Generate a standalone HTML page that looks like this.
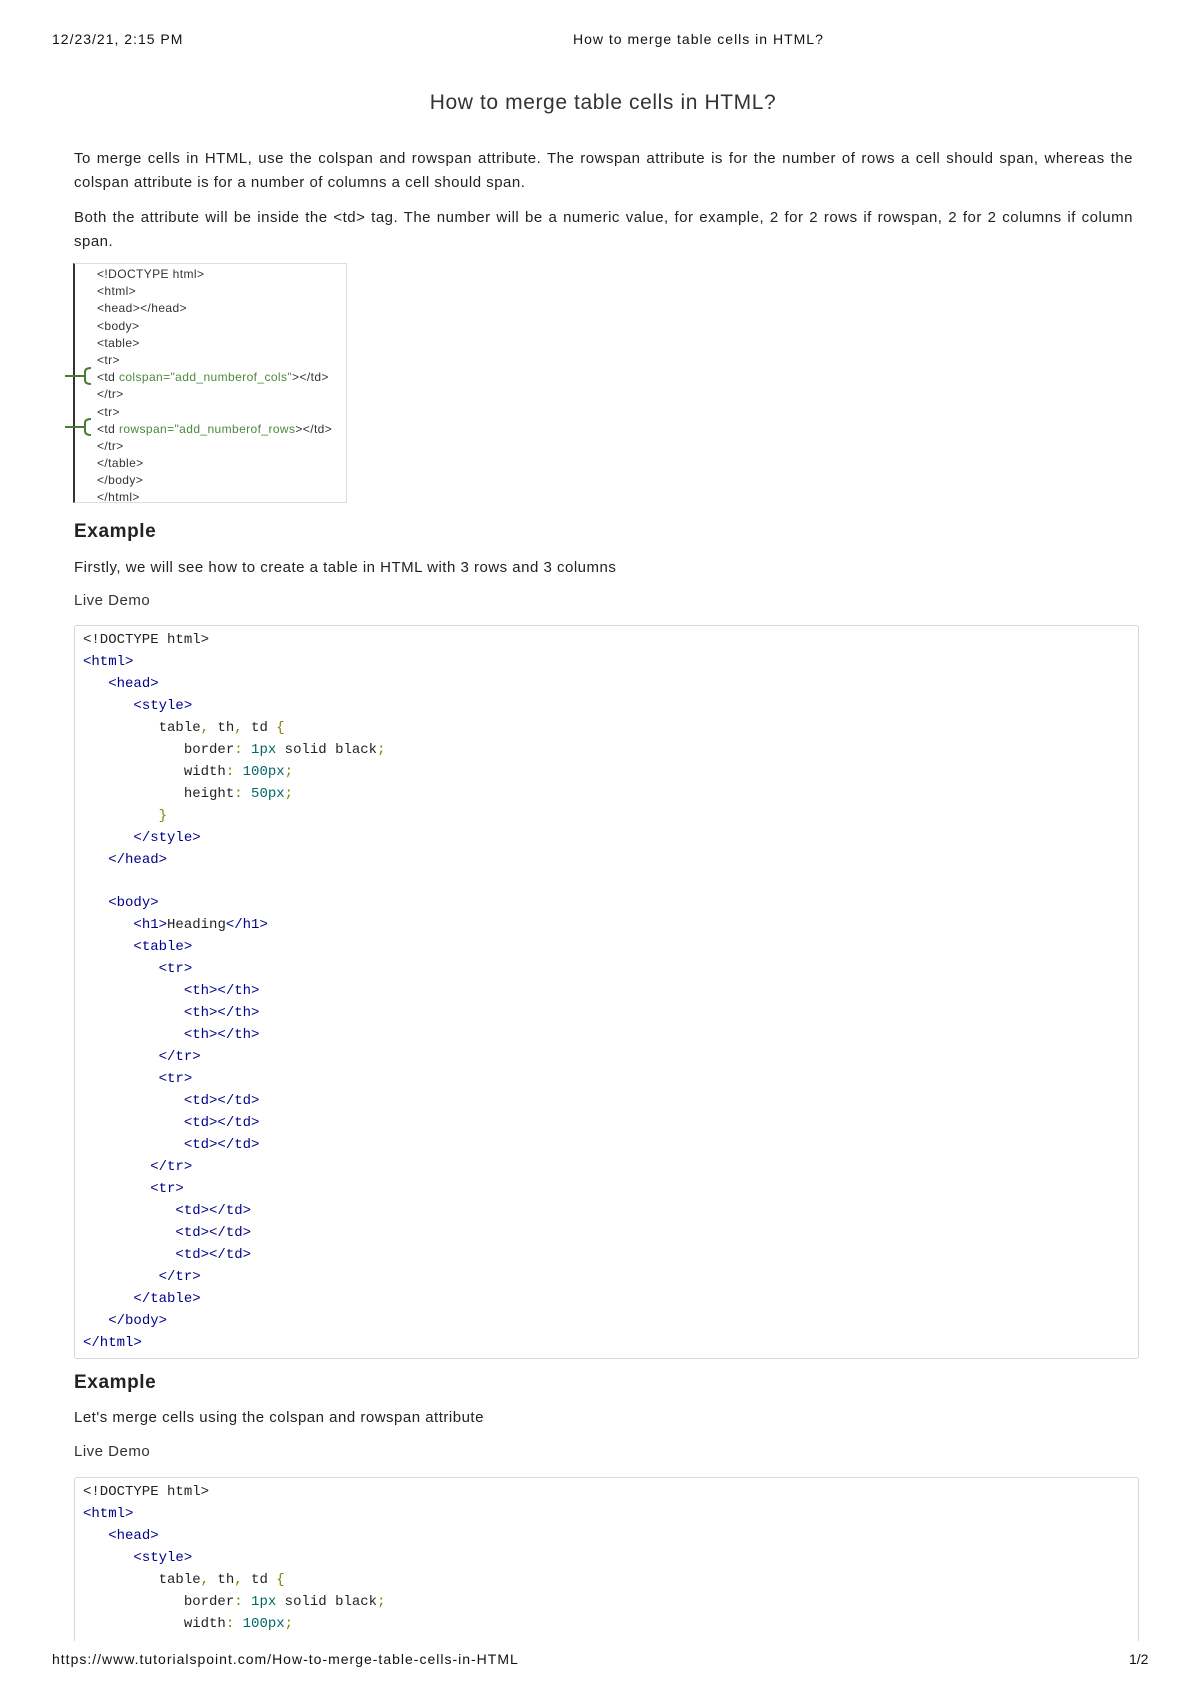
<!DOCTYPE html>
<html><head><meta charset="utf-8">
<style>
*{margin:0;padding:0;box-sizing:border-box}
body{width:1200px;height:1698px;background:#fff;position:relative;overflow:hidden;font-family:"Liberation Sans",sans-serif;color:#222}
.a{position:absolute;white-space:nowrap}
.hdr{font-size:14px;color:#111;letter-spacing:1px}
p.t{position:absolute;left:74px;width:1059px;font-size:15px;line-height:24px;text-align:justify;color:#222;letter-spacing:0.5px}
h2{position:absolute;left:74px;font-size:19px;font-weight:bold;color:#222;letter-spacing:0.6px}
.s{font-size:15px;color:#222;letter-spacing:0.5px}
.code{position:absolute;left:74px;width:1065px;border:1px solid #d8d8d8;border-radius:3px;background:#fff;overflow:hidden}
.code pre{font-family:"Liberation Mono",monospace;font-size:14px;line-height:21.95px;color:#222;padding:4px 0 0 8px}
.k{color:#000088}
.n{color:#006666}
.o{color:#808000}
.img{position:absolute;left:73px;top:263px;width:274px;height:240px;border:1px solid #ddd;border-left:2px solid #333;background:#fff}
.img div{position:absolute;left:22px;font-size:12px;letter-spacing:0.4px;color:#333;white-space:nowrap;font-family:"Liberation Sans",sans-serif}
.img .g{color:#4a8a3a}
</style></head><body>
<div class="a hdr" style="left:52px;top:31px">12/23/21, 2:15 PM</div>
<div class="a hdr" style="left:573px;top:31px">How to merge table cells in HTML?</div>
<div class="a" style="left:0;width:1206px;text-align:center;top:91px;font-size:21px;color:#333;letter-spacing:0.6px">How to merge table cells in HTML?</div>

<p class="t" style="top:147px">To merge cells in HTML, use the colspan and rowspan attribute. The rowspan attribute is for the number of rows a cell should span, whereas the colspan attribute is for a number of columns a cell should span.</p>
<p class="t" style="top:206px">Both the attribute will be inside the &lt;td&gt; tag. The number will be a numeric value, for example, 2 for 2 rows if rowspan, 2 for 2 columns if column span.</p>

<div class="img">
<div style="top:3px">&lt;!DOCTYPE html&gt;</div>
<div style="top:20px">&lt;html&gt;</div>
<div style="top:37px">&lt;head&gt;&lt;/head&gt;</div>
<div style="top:55px">&lt;body&gt;</div>
<div style="top:72px">&lt;table&gt;</div>
<div style="top:89px">&lt;tr&gt;</div>
<div style="top:106px">&lt;td <span class="g">colspan="add_numberof_cols"</span>&gt;&lt;/td&gt;</div>
<div style="top:123px">&lt;/tr&gt;</div>
<div style="top:141px">&lt;tr&gt;</div>
<div style="top:158px">&lt;td <span class="g">rowspan="add_numberof_rows</span>&gt;&lt;/td&gt;</div>
<div style="top:175px">&lt;/tr&gt;</div>
<div style="top:192px">&lt;/table&gt;</div>
<div style="top:209px">&lt;/body&gt;</div>
<div style="top:226px">&lt;/html&gt;</div>
<svg style="position:absolute;left:-10px;top:98px" width="30" height="80"><path d="M0 14H20M26 6Q20 6 20 10V18Q20 22 26 22M0 65H20M26 57Q20 57 20 61V69Q20 73 26 73" stroke="#4a7a3a" stroke-width="2" fill="none"/></svg>
</div>

<h2 style="top:521px">Example</h2>
<div class="a s" style="left:74px;top:559px">Firstly, we will see how to create a table in HTML with 3 rows and 3 columns</div>
<div class="a s" style="left:74px;top:592px;color:#333">Live Demo</div>

<div class="code" style="top:625px;height:734px"><pre>&lt;!DOCTYPE html&gt;
<span class="k">&lt;html&gt;</span>
   <span class="k">&lt;head&gt;</span>
      <span class="k">&lt;style&gt;</span>
         table<span class="o">,</span> th<span class="o">,</span> td <span class="o">{</span>
            border<span class="o">:</span> <span class="n">1px</span> solid black<span class="o">;</span>
            width<span class="o">:</span> <span class="n">100px</span><span class="o">;</span>
            height<span class="o">:</span> <span class="n">50px</span><span class="o">;</span>
         <span class="o">}</span>
      <span class="k">&lt;/style&gt;</span>
   <span class="k">&lt;/head&gt;</span>

   <span class="k">&lt;body&gt;</span>
      <span class="k">&lt;h1&gt;</span>Heading<span class="k">&lt;/h1&gt;</span>
      <span class="k">&lt;table&gt;</span>
         <span class="k">&lt;tr&gt;</span>
            <span class="k">&lt;th&gt;&lt;/th&gt;</span>
            <span class="k">&lt;th&gt;&lt;/th&gt;</span>
            <span class="k">&lt;th&gt;&lt;/th&gt;</span>
         <span class="k">&lt;/tr&gt;</span>
         <span class="k">&lt;tr&gt;</span>
            <span class="k">&lt;td&gt;&lt;/td&gt;</span>
            <span class="k">&lt;td&gt;&lt;/td&gt;</span>
            <span class="k">&lt;td&gt;&lt;/td&gt;</span>
        <span class="k">&lt;/tr&gt;</span>
        <span class="k">&lt;tr&gt;</span>
           <span class="k">&lt;td&gt;&lt;/td&gt;</span>
           <span class="k">&lt;td&gt;&lt;/td&gt;</span>
           <span class="k">&lt;td&gt;&lt;/td&gt;</span>
         <span class="k">&lt;/tr&gt;</span>
      <span class="k">&lt;/table&gt;</span>
   <span class="k">&lt;/body&gt;</span>
<span class="k">&lt;/html&gt;</span></pre></div>

<h2 style="top:1372px">Example</h2>
<div class="a s" style="left:74px;top:1409px">Let's merge cells using the colspan and rowspan attribute</div>
<div class="a s" style="left:74px;top:1443px;color:#333">Live Demo</div>

<div class="code" style="top:1477px;height:164px;border-bottom:none;border-radius:3px 3px 0 0"><pre>&lt;!DOCTYPE html&gt;
<span class="k">&lt;html&gt;</span>
   <span class="k">&lt;head&gt;</span>
      <span class="k">&lt;style&gt;</span>
         table<span class="o">,</span> th<span class="o">,</span> td <span class="o">{</span>
            border<span class="o">:</span> <span class="n">1px</span> solid black<span class="o">;</span>
            width<span class="o">:</span> <span class="n">100px</span><span class="o">;</span></pre></div>
<div class="a hdr" style="left:52px;top:1651px">https://www.tutorialspoint.com/How-to-merge-table-cells-in-HTML</div>
<div class="a hdr" style="left:1129px;top:1651px;letter-spacing:0">1/2</div>
</body></html>
